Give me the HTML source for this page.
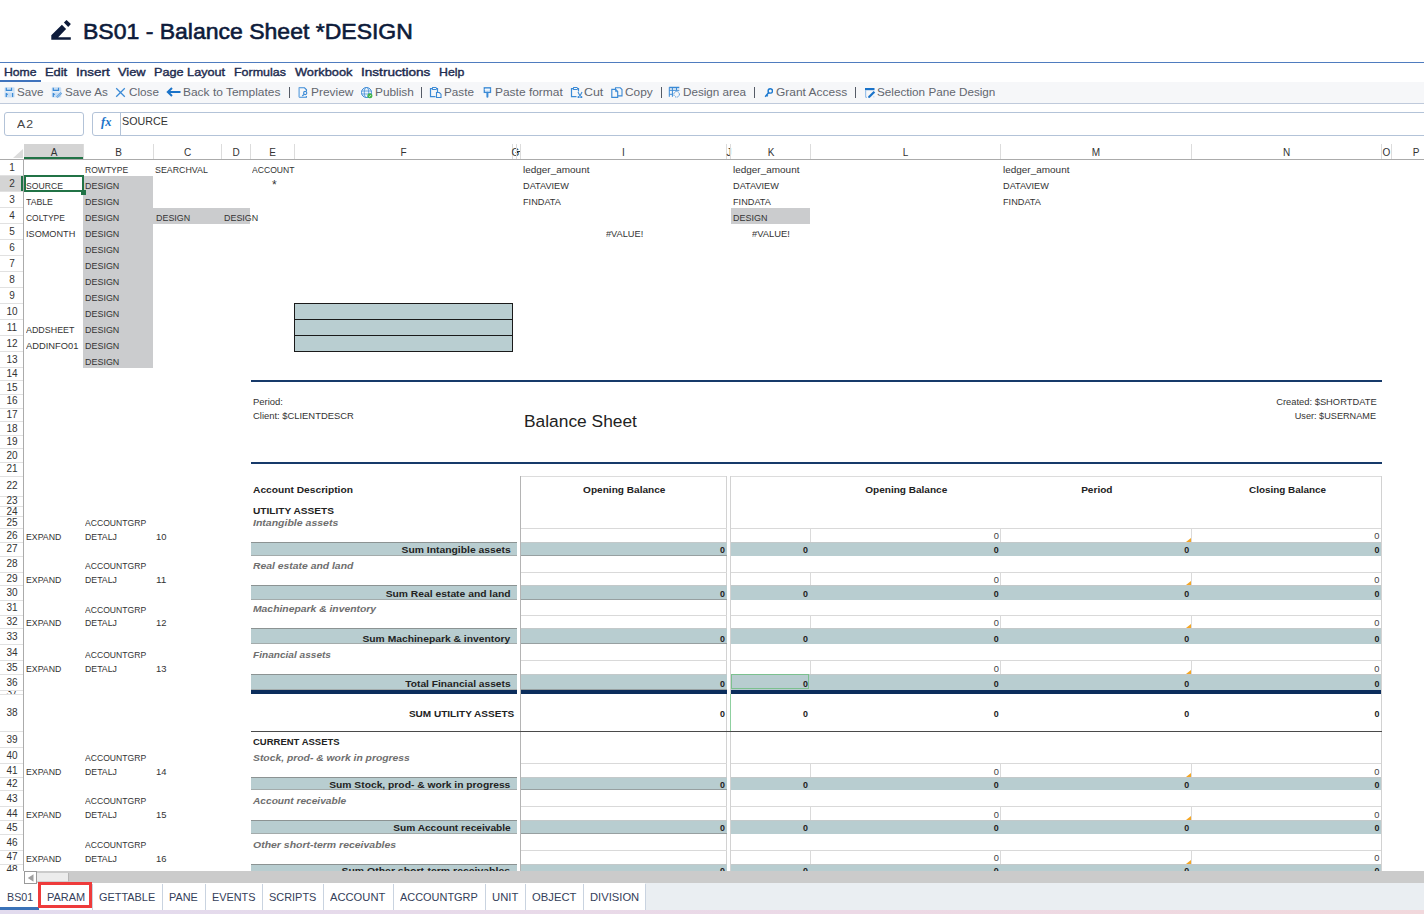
<!DOCTYPE html>
<html><head><meta charset="utf-8"><title>BS01 - Balance Sheet *DESIGN</title>
<style>
html,body{margin:0;padding:0;background:#fff;}
body{width:1424px;height:914px;position:relative;overflow:hidden;font-family:"Liberation Sans",sans-serif;}
body>div{position:absolute;box-sizing:border-box;}
.t{line-height:0;white-space:nowrap;}
</style></head><body>
<svg style="position:absolute;left:51px;top:20px" width="20" height="20" viewBox="0 0 20 20"><path d="M0.3 19.8 L0.3 15.2 L10.9 4.7 L15.1 8.9 L7.2 17.2 L19.8 17.2 L19.8 19.8 Z" fill="#0d1b3a"/><path d="M12.9 2.4 L15.5 0 L19.9 4.1 L17.2 7 Z" fill="#0d1b3a"/></svg>
<div class="t" style="left:83.00px;top:31.54px;font-size:22.4px;color:#0d1b3a;font-weight:normal;font-style:normal;transform:scaleX(1.0273);transform-origin:0 0;-webkit-text-stroke:0.6px #0d1b3a;">BS01 - Balance Sheet *DESIGN</div>
<div style="left:0px;top:62px;width:1424px;height:1px;background:#4f7cbf;"></div>
<div class="t" style="left:4.10px;top:71.92px;font-size:11.5px;color:#1d2b4f;font-weight:normal;font-style:normal;transform:scaleX(1.0627);transform-origin:0 0;-webkit-text-stroke:0.4px #1d2b4f;">Home</div>
<div class="t" style="left:45.20px;top:71.92px;font-size:11.5px;color:#1d2b4f;font-weight:normal;font-style:normal;transform:scaleX(1.1203);transform-origin:0 0;-webkit-text-stroke:0.4px #1d2b4f;">Edit</div>
<div class="t" style="left:75.80px;top:71.92px;font-size:11.5px;color:#1d2b4f;font-weight:normal;font-style:normal;transform:scaleX(1.1752);transform-origin:0 0;-webkit-text-stroke:0.4px #1d2b4f;">Insert</div>
<div class="t" style="left:118.20px;top:71.92px;font-size:11.5px;color:#1d2b4f;font-weight:normal;font-style:normal;transform:scaleX(1.1166);transform-origin:0 0;-webkit-text-stroke:0.4px #1d2b4f;">View</div>
<div class="t" style="left:154.40px;top:71.92px;font-size:11.5px;color:#1d2b4f;font-weight:normal;font-style:normal;transform:scaleX(1.1009);transform-origin:0 0;-webkit-text-stroke:0.4px #1d2b4f;">Page Layout</div>
<div class="t" style="left:234.20px;top:71.92px;font-size:11.5px;color:#1d2b4f;font-weight:normal;font-style:normal;transform:scaleX(1.0829);transform-origin:0 0;-webkit-text-stroke:0.4px #1d2b4f;">Formulas</div>
<div class="t" style="left:294.90px;top:71.92px;font-size:11.5px;color:#1d2b4f;font-weight:normal;font-style:normal;transform:scaleX(1.1133);transform-origin:0 0;-webkit-text-stroke:0.4px #1d2b4f;">Workbook</div>
<div class="t" style="left:361.30px;top:71.92px;font-size:11.5px;color:#1d2b4f;font-weight:normal;font-style:normal;transform:scaleX(1.1802);transform-origin:0 0;-webkit-text-stroke:0.4px #1d2b4f;">Instructions</div>
<div class="t" style="left:439.40px;top:71.92px;font-size:11.5px;color:#1d2b4f;font-weight:normal;font-style:normal;transform:scaleX(1.0697);transform-origin:0 0;-webkit-text-stroke:0.4px #1d2b4f;">Help</div>
<div style="left:0px;top:80px;width:41px;height:2px;background:#3f73bd;"></div>
<div style="left:0px;top:82px;width:1424px;height:21px;background:#f6f7f9;"></div>
<div style="left:0px;top:103px;width:1424px;height:1px;background:#bfcadb;"></div>
<div class="t" style="left:17.00px;top:92.18px;font-size:11.3px;color:#62666f;font-weight:normal;font-style:normal;transform:scaleX(1.0289);transform-origin:0 0;">Save</div>
<div class="t" style="left:64.70px;top:92.18px;font-size:11.3px;color:#62666f;font-weight:normal;font-style:normal;transform:scaleX(1.0323);transform-origin:0 0;">Save As</div>
<div class="t" style="left:128.70px;top:92.18px;font-size:11.3px;color:#62666f;font-weight:normal;font-style:normal;transform:scaleX(1.0350);transform-origin:0 0;">Close</div>
<div class="t" style="left:183.30px;top:92.18px;font-size:11.3px;color:#62666f;font-weight:normal;font-style:normal;transform:scaleX(1.0584);transform-origin:0 0;">Back to Templates</div>
<div class="t" style="left:311.20px;top:92.18px;font-size:11.3px;color:#62666f;font-weight:normal;font-style:normal;transform:scaleX(1.0575);transform-origin:0 0;">Preview</div>
<div class="t" style="left:374.70px;top:92.18px;font-size:11.3px;color:#62666f;font-weight:normal;font-style:normal;transform:scaleX(1.0469);transform-origin:0 0;">Publish</div>
<div class="t" style="left:443.70px;top:92.18px;font-size:11.3px;color:#62666f;font-weight:normal;font-style:normal;transform:scaleX(1.0348);transform-origin:0 0;">Paste</div>
<div class="t" style="left:495.10px;top:92.18px;font-size:11.3px;color:#62666f;font-weight:normal;font-style:normal;transform:scaleX(1.0584);transform-origin:0 0;">Paste format</div>
<div class="t" style="left:584.10px;top:92.18px;font-size:11.3px;color:#62666f;font-weight:normal;font-style:normal;transform:scaleX(1.0976);transform-origin:0 0;">Cut</div>
<div class="t" style="left:624.60px;top:92.18px;font-size:11.3px;color:#62666f;font-weight:normal;font-style:normal;transform:scaleX(1.0501);transform-origin:0 0;">Copy</div>
<div class="t" style="left:682.70px;top:92.18px;font-size:11.3px;color:#62666f;font-weight:normal;font-style:normal;transform:scaleX(1.0340);transform-origin:0 0;">Design area</div>
<div class="t" style="left:775.70px;top:92.18px;font-size:11.3px;color:#62666f;font-weight:normal;font-style:normal;transform:scaleX(1.0595);transform-origin:0 0;">Grant Access</div>
<div class="t" style="left:877.20px;top:92.18px;font-size:11.3px;color:#62666f;font-weight:normal;font-style:normal;transform:scaleX(1.0356);transform-origin:0 0;">Selection Pane Design</div>
<div style="left:289px;top:87px;width:1px;height:11px;background:#555b66;"></div>
<div style="left:421px;top:87px;width:1px;height:11px;background:#555b66;"></div>
<div style="left:661px;top:87px;width:1px;height:11px;background:#555b66;"></div>
<div style="left:754px;top:87px;width:1px;height:11px;background:#555b66;"></div>
<div style="left:855px;top:87px;width:1px;height:11px;background:#555b66;"></div>
<svg style="position:absolute;left:4px;top:87px" width="12" height="11" viewBox="0 0 12 11"><rect x="0.6" y="0.2" width="10" height="10.3" rx="1.2" fill="#c6ddf4"/><rect x="1.6" y="4.4" width="8" height="1" fill="#f4f8fc"/><path d="M2.3 0.8V3.3H7.5V0.8M2.3 6V9.9M8.6 6V9.9M2.3 7.3H3.8" fill="none" stroke="#3b8ad6" stroke-width="1.15"/></svg>
<svg style="position:absolute;left:51px;top:87px" width="12" height="11" viewBox="0 0 12 11"><rect x="0.7" y="0.2" width="9.5" height="10.3" rx="1.2" fill="#c6ddf4"/><rect x="1.7" y="4.4" width="7.5" height="1" fill="#f4f8fc"/><path d="M2.3 0.8V3.3H7.5V0.8M2.3 6V9.9M2.3 7.3H3.8" fill="none" stroke="#3b8ad6" stroke-width="1.15"/><path d="M5.8 10.3L10.4 5.8" stroke="#6aa6e0" stroke-width="2.2"/><path d="M5.8 10.3L10.4 5.8" stroke="#fff" stroke-width="0.5" opacity="0.6"/></svg>
<svg style="position:absolute;left:115px;top:87px" width="11" height="11" viewBox="0 0 11 11"><path d="M1.2 1.2L9.8 9.8M9.8 1.2L1.2 9.8" stroke="#3b8ad6" stroke-width="1.25"/></svg>
<svg style="position:absolute;left:166px;top:87px" width="15" height="10" viewBox="0 0 15 10"><path d="M2 5H14.5M6 1L1.8 5L6 9" fill="none" stroke="#1a73c9" stroke-width="2"/></svg>
<svg style="position:absolute;left:298px;top:87px" width="10" height="11" viewBox="0 0 10 11"><path d="M1.2 10.3V0.8H6.5L8.5 2.8V4" fill="none" stroke="#3b8ad6" stroke-width="1.1"/><path d="M1.2 10.3H8.4V9" fill="none" stroke="#3b8ad6" stroke-width="1.1"/><path d="M1.2 1V10" stroke="#9cc4ea" stroke-width="1.1"/><circle cx="7.2" cy="6" r="1.6" fill="none" stroke="#3b8ad6" stroke-width="1.1"/><path d="M6 7.3L4.3 9" stroke="#3b8ad6" stroke-width="1.2"/></svg>
<svg style="position:absolute;left:361px;top:87px" width="13" height="12" viewBox="0 0 13 12"><circle cx="5.5" cy="5.5" r="5" fill="#e9f2fb" stroke="#3b8ad6" stroke-width="1"/><ellipse cx="5.5" cy="5.5" rx="2.2" ry="5" fill="none" stroke="#3b8ad6" stroke-width="0.8"/><path d="M0.5 4H10.5M0.5 7H10.5" stroke="#3b8ad6" stroke-width="0.7"/><circle cx="8.9" cy="8.7" r="2.5" fill="#3fb44a"/><path d="M7.9 8.8L8.7 9.5L10 8" fill="none" stroke="#fff" stroke-width="0.7"/></svg>
<svg style="position:absolute;left:429px;top:87px" width="13" height="11" viewBox="0 0 13 11"><path d="M6.5 9.6H1.5V1.6H8.5V5" fill="none" stroke="#3b8ad6" stroke-width="1.2"/><rect x="3.6" y="0.5" width="3.4" height="2" fill="#f6f7f9" stroke="#3b8ad6" stroke-width="1"/><path d="M7.5 5.5H10.3L12 7.2V10.6H7.5Z" fill="#f6f7f9" stroke="#3b8ad6" stroke-width="1.1"/></svg>
<svg style="position:absolute;left:483px;top:87px" width="9" height="11" viewBox="0 0 9 11"><rect x="1.3" y="0.8" width="6.2" height="4.6" fill="#dbe9f7" stroke="#3b8ad6" stroke-width="1.3"/><path d="M1.6 2.6H7.2" stroke="#fff" stroke-width="0.7"/><path d="M4.4 5.8V9.8" stroke="#3b8ad6" stroke-width="2" stroke-linecap="round"/></svg>
<svg style="position:absolute;left:570px;top:87px" width="13" height="11" viewBox="0 0 13 11"><path d="M6.5 9.6H1.5V1.6H8.5V4.5" fill="none" stroke="#3b8ad6" stroke-width="1.2"/><rect x="3.6" y="0.5" width="3.4" height="2" fill="#f6f7f9" stroke="#3b8ad6" stroke-width="1"/><path d="M8 5L10 9M12 5L10 9" stroke="#3b8ad6" stroke-width="1.1"/><circle cx="8.6" cy="10" r="1.1" fill="#3b8ad6"/><circle cx="11.3" cy="10" r="1.1" fill="#3b8ad6"/></svg>
<svg style="position:absolute;left:611px;top:87px" width="12" height="11" viewBox="0 0 12 11"><path d="M4.5 2.6V0.8H9.3L11 2.5V8.9H7" fill="none" stroke="#3b8ad6" stroke-width="1.1"/><path d="M0.8 2.4H4.6L6.7 4.5V10.4H0.8Z" fill="#f6f7f9" stroke="#3b8ad6" stroke-width="1.15"/><path d="M4.5 2.4V4.6H6.7" fill="none" stroke="#3b8ad6" stroke-width="0.8"/></svg>
<svg style="position:absolute;left:668px;top:86px" width="12" height="12" viewBox="0 0 12 12"><path d="M1.3 1.5H11.3" stroke="#3b8ad6" stroke-width="1.5"/><path d="M1.3 1.2V10.8M4.4 1.2V10.8M8.5 1.2V4.3M1.3 4.3H11.3M1.3 8.3H4.4" fill="none" stroke="#3b8ad6" stroke-width="1"/><circle cx="8.6" cy="8.3" r="2.8" fill="none" stroke="#3b8ad6" stroke-width="1" stroke-dasharray="1.3 1"/></svg>
<svg style="position:absolute;left:764px;top:87px" width="9" height="12" viewBox="0 0 9 12"><circle cx="6.3" cy="3.9" r="2.2" fill="none" stroke="#1a78cf" stroke-width="1.4"/><path d="M4.7 5.6L1.2 9.8M2.6 8.1L3.8 9.2" stroke="#1a78cf" stroke-width="1.5"/></svg>
<svg style="position:absolute;left:864px;top:87px" width="12" height="12" viewBox="0 0 12 12"><rect x="1" y="1" width="9.5" height="2.2" fill="#1a73c9"/><path d="M1.6 3V10.3M1.6 10.3H3M9.8 9.6V10.3" stroke="#9cc2ea" stroke-width="1.2"/><path d="M4.8 10.3L10.4 4.7" stroke="#1a73c9" stroke-width="2.2"/><path d="M4.5 10.6L5.3 9.8" stroke="#1a73c9" stroke-width="1.2"/></svg>
<div style="left:4px;top:112px;width:80px;height:24px;border:1px solid #b3c3d8;border-radius:3px;background:#fff"></div>
<div class="t" style="left:17.00px;top:123.88px;font-size:11.3px;color:#444;font-weight:normal;font-style:normal;transform:scaleX(1.0853);transform-origin:0 0;letter-spacing:1px;">A2</div>
<div style="left:92px;top:112px;width:1340px;height:24px;border:1px solid #b3c3d8;border-radius:3px;background:#fff"></div>
<div style="left:120px;top:113px;width:1px;height:22px;background:#b3c3d8;"></div>
<div class="t" style="left:101px;top:121.8px;font-size:12.5px;color:#1a73c9;font-weight:bold;font-style:italic;font-family:'Liberation Serif',serif">fx</div>
<div class="t" style="left:121.50px;top:121.38px;font-size:11.3px;color:#333;font-weight:normal;font-style:normal;transform:scaleX(0.9474);transform-origin:0 0;">SOURCE</div>
<div style="left:24px;top:144px;width:59px;height:15px;background:#d4d4d4;"></div>
<div style="left:24px;top:157px;width:59px;height:2px;background:#217346;"></div>
<div style="left:0px;top:159px;width:1424px;height:1px;background:#ababab;"></div>
<div class="t" style="left:50.66px;top:152.73px;font-size:10px;color:#333;font-weight:normal;font-style:normal;">A</div>
<div style="left:83px;top:144px;width:1px;height:15px;background:#dcdcdc;"></div>
<div class="t" style="left:115.17px;top:152.73px;font-size:10px;color:#333;font-weight:normal;font-style:normal;">B</div>
<div style="left:153px;top:144px;width:1px;height:15px;background:#dcdcdc;"></div>
<div class="t" style="left:183.89px;top:152.73px;font-size:10px;color:#333;font-weight:normal;font-style:normal;">C</div>
<div style="left:221px;top:144px;width:1px;height:15px;background:#dcdcdc;"></div>
<div class="t" style="left:232.39px;top:152.73px;font-size:10px;color:#333;font-weight:normal;font-style:normal;">D</div>
<div style="left:250px;top:144px;width:1px;height:15px;background:#dcdcdc;"></div>
<div class="t" style="left:269.17px;top:152.73px;font-size:10px;color:#333;font-weight:normal;font-style:normal;">E</div>
<div style="left:294px;top:144px;width:1px;height:15px;background:#dcdcdc;"></div>
<div class="t" style="left:400.45px;top:152.73px;font-size:10px;color:#333;font-weight:normal;font-style:normal;">F</div>
<div style="left:512px;top:144px;width:1px;height:15px;background:#dcdcdc;"></div>
<div class="t" style="left:511.61px;top:152.73px;font-size:10px;color:#333;font-weight:normal;font-style:normal;">G</div>
<div style="left:516px;top:144px;width:1px;height:15px;background:#dcdcdc;"></div>
<div style="left:517px;top:144px;width:3px;height:15px;overflow:hidden">
<div class="t" style="position:absolute;left:-2.11px;top:8.73px;font-size:10px;color:#333">H</div></div>
<div style="left:520px;top:144px;width:1px;height:15px;background:#dcdcdc;"></div>
<div class="t" style="left:622.11px;top:152.73px;font-size:10px;color:#333;font-weight:normal;font-style:normal;">I</div>
<div style="left:726px;top:144px;width:1px;height:15px;background:#dcdcdc;"></div>
<div class="t" style="left:726.50px;top:152.73px;font-size:10px;color:#333;font-weight:normal;font-style:normal;">J</div>
<div style="left:730px;top:144px;width:1px;height:15px;background:#dcdcdc;"></div>
<div class="t" style="left:767.66px;top:152.73px;font-size:10px;color:#333;font-weight:normal;font-style:normal;">K</div>
<div style="left:810px;top:144px;width:1px;height:15px;background:#dcdcdc;"></div>
<div class="t" style="left:902.72px;top:152.73px;font-size:10px;color:#333;font-weight:normal;font-style:normal;">L</div>
<div style="left:1000px;top:144px;width:1px;height:15px;background:#dcdcdc;"></div>
<div class="t" style="left:1091.83px;top:152.73px;font-size:10px;color:#333;font-weight:normal;font-style:normal;">M</div>
<div style="left:1191px;top:144px;width:1px;height:15px;background:#dcdcdc;"></div>
<div class="t" style="left:1282.89px;top:152.73px;font-size:10px;color:#333;font-weight:normal;font-style:normal;">N</div>
<div style="left:1381px;top:144px;width:1px;height:15px;background:#dcdcdc;"></div>
<div style="left:1382px;top:144px;width:9px;height:15px;overflow:hidden">
<div class="t" style="position:absolute;left:0.61px;top:8.73px;font-size:10px;color:#333">O</div></div>
<div style="left:1391px;top:144px;width:1px;height:15px;background:#dcdcdc;"></div>
<div class="t" style="left:1412.66px;top:152.73px;font-size:10px;color:#333;font-weight:normal;font-style:normal;">P</div>
<svg style="position:absolute;left:13px;top:149px" width="10" height="9" viewBox="0 0 10 9"><path d="M10 0V9H0Z" fill="#dcdcdc"/></svg>
<div style="left:23px;top:159px;width:1px;height:712px;background:#ababab;"></div>
<div style="left:0px;top:175px;width:23px;height:16px;background:#d4d4d4;"></div>
<div style="left:21px;top:176px;width:2px;height:15px;background:#217346;"></div>
<div style="left:0px;top:175px;width:23px;height:1px;background:#e1e1e1;"></div>
<div class="t" style="left:9.22px;top:167.63px;font-size:10px;color:#333;font-weight:normal;font-style:normal;">1</div>
<div style="left:0px;top:191px;width:23px;height:1px;background:#e1e1e1;"></div>
<div class="t" style="left:9.22px;top:183.63px;font-size:10px;color:#333;font-weight:normal;font-style:normal;">2</div>
<div style="left:0px;top:207px;width:23px;height:1px;background:#e1e1e1;"></div>
<div class="t" style="left:9.22px;top:199.63px;font-size:10px;color:#333;font-weight:normal;font-style:normal;">3</div>
<div style="left:0px;top:223px;width:23px;height:1px;background:#e1e1e1;"></div>
<div class="t" style="left:9.22px;top:215.63px;font-size:10px;color:#333;font-weight:normal;font-style:normal;">4</div>
<div style="left:0px;top:239px;width:23px;height:1px;background:#e1e1e1;"></div>
<div class="t" style="left:9.22px;top:231.63px;font-size:10px;color:#333;font-weight:normal;font-style:normal;">5</div>
<div style="left:0px;top:255px;width:23px;height:1px;background:#e1e1e1;"></div>
<div class="t" style="left:9.22px;top:247.63px;font-size:10px;color:#333;font-weight:normal;font-style:normal;">6</div>
<div style="left:0px;top:271px;width:23px;height:1px;background:#e1e1e1;"></div>
<div class="t" style="left:9.22px;top:263.64px;font-size:10px;color:#333;font-weight:normal;font-style:normal;">7</div>
<div style="left:0px;top:287px;width:23px;height:1px;background:#e1e1e1;"></div>
<div class="t" style="left:9.22px;top:279.64px;font-size:10px;color:#333;font-weight:normal;font-style:normal;">8</div>
<div style="left:0px;top:303px;width:23px;height:1px;background:#e1e1e1;"></div>
<div class="t" style="left:9.22px;top:295.64px;font-size:10px;color:#333;font-weight:normal;font-style:normal;">9</div>
<div style="left:0px;top:319px;width:23px;height:1px;background:#e1e1e1;"></div>
<div class="t" style="left:6.44px;top:311.64px;font-size:10px;color:#333;font-weight:normal;font-style:normal;">10</div>
<div style="left:0px;top:335px;width:23px;height:1px;background:#e1e1e1;"></div>
<div class="t" style="left:6.81px;top:327.64px;font-size:10px;color:#333;font-weight:normal;font-style:normal;">11</div>
<div style="left:0px;top:351px;width:23px;height:1px;background:#e1e1e1;"></div>
<div class="t" style="left:6.44px;top:343.64px;font-size:10px;color:#333;font-weight:normal;font-style:normal;">12</div>
<div style="left:0px;top:367px;width:23px;height:1px;background:#e1e1e1;"></div>
<div class="t" style="left:6.44px;top:359.64px;font-size:10px;color:#333;font-weight:normal;font-style:normal;">13</div>
<div style="left:0px;top:380px;width:23px;height:1px;background:#e1e1e1;"></div>
<div class="t" style="left:6.44px;top:374.39px;font-size:10px;color:#333;font-weight:normal;font-style:normal;">14</div>
<div style="left:0px;top:394px;width:23px;height:1px;background:#e1e1e1;"></div>
<div class="t" style="left:6.44px;top:387.89px;font-size:10px;color:#333;font-weight:normal;font-style:normal;">15</div>
<div style="left:0px;top:408px;width:23px;height:1px;background:#e1e1e1;"></div>
<div class="t" style="left:6.44px;top:401.49px;font-size:10px;color:#333;font-weight:normal;font-style:normal;">16</div>
<div style="left:0px;top:421px;width:23px;height:1px;background:#e1e1e1;"></div>
<div class="t" style="left:6.44px;top:415.14px;font-size:10px;color:#333;font-weight:normal;font-style:normal;">17</div>
<div style="left:0px;top:435px;width:23px;height:1px;background:#e1e1e1;"></div>
<div class="t" style="left:6.44px;top:428.64px;font-size:10px;color:#333;font-weight:normal;font-style:normal;">18</div>
<div style="left:0px;top:448px;width:23px;height:1px;background:#e1e1e1;"></div>
<div class="t" style="left:6.44px;top:442.14px;font-size:10px;color:#333;font-weight:normal;font-style:normal;">19</div>
<div style="left:0px;top:462px;width:23px;height:1px;background:#e1e1e1;"></div>
<div class="t" style="left:6.44px;top:455.74px;font-size:10px;color:#333;font-weight:normal;font-style:normal;">20</div>
<div style="left:0px;top:476px;width:23px;height:1px;background:#e1e1e1;"></div>
<div class="t" style="left:6.44px;top:469.39px;font-size:10px;color:#333;font-weight:normal;font-style:normal;">21</div>
<div style="left:0px;top:496px;width:23px;height:1px;background:#e1e1e1;"></div>
<div class="t" style="left:6.44px;top:486.34px;font-size:10px;color:#333;font-weight:normal;font-style:normal;">22</div>
<div style="left:0px;top:506px;width:23px;height:1px;background:#e1e1e1;"></div>
<div class="t" style="left:6.44px;top:501.39px;font-size:10px;color:#333;font-weight:normal;font-style:normal;">23</div>
<div style="left:0px;top:516px;width:23px;height:1px;background:#e1e1e1;"></div>
<div class="t" style="left:6.44px;top:511.54px;font-size:10px;color:#333;font-weight:normal;font-style:normal;">24</div>
<div style="left:0px;top:528px;width:23px;height:1px;background:#e1e1e1;"></div>
<div class="t" style="left:6.44px;top:522.74px;font-size:10px;color:#333;font-weight:normal;font-style:normal;">25</div>
<div style="left:0px;top:542px;width:23px;height:1px;background:#e1e1e1;"></div>
<div class="t" style="left:6.44px;top:535.59px;font-size:10px;color:#333;font-weight:normal;font-style:normal;">26</div>
<div style="left:0px;top:556px;width:23px;height:1px;background:#e1e1e1;"></div>
<div class="t" style="left:6.44px;top:549.38px;font-size:10px;color:#333;font-weight:normal;font-style:normal;">27</div>
<div style="left:0px;top:572px;width:23px;height:1px;background:#e1e1e1;"></div>
<div class="t" style="left:6.44px;top:564.24px;font-size:10px;color:#333;font-weight:normal;font-style:normal;">28</div>
<div style="left:0px;top:585px;width:23px;height:1px;background:#e1e1e1;"></div>
<div class="t" style="left:6.44px;top:578.99px;font-size:10px;color:#333;font-weight:normal;font-style:normal;">29</div>
<div style="left:0px;top:600px;width:23px;height:1px;background:#e1e1e1;"></div>
<div class="t" style="left:6.44px;top:592.99px;font-size:10px;color:#333;font-weight:normal;font-style:normal;">30</div>
<div style="left:0px;top:615px;width:23px;height:1px;background:#e1e1e1;"></div>
<div class="t" style="left:6.44px;top:607.84px;font-size:10px;color:#333;font-weight:normal;font-style:normal;">31</div>
<div style="left:0px;top:628px;width:23px;height:1px;background:#e1e1e1;"></div>
<div class="t" style="left:6.44px;top:622.18px;font-size:10px;color:#333;font-weight:normal;font-style:normal;">32</div>
<div style="left:0px;top:644px;width:23px;height:1px;background:#e1e1e1;"></div>
<div class="t" style="left:6.44px;top:636.88px;font-size:10px;color:#333;font-weight:normal;font-style:normal;">33</div>
<div style="left:0px;top:660px;width:23px;height:1px;background:#e1e1e1;"></div>
<div class="t" style="left:6.44px;top:652.78px;font-size:10px;color:#333;font-weight:normal;font-style:normal;">34</div>
<div style="left:0px;top:674px;width:23px;height:1px;background:#e1e1e1;"></div>
<div class="t" style="left:6.44px;top:667.63px;font-size:10px;color:#333;font-weight:normal;font-style:normal;">35</div>
<div style="left:0px;top:690px;width:23px;height:1px;background:#e1e1e1;"></div>
<div class="t" style="left:6.44px;top:682.68px;font-size:10px;color:#333;font-weight:normal;font-style:normal;">36</div>
<div style="left:0px;top:694px;width:23px;height:1px;background:#e1e1e1;"></div>
<div style="left:0px;top:691px;width:23px;height:3px;overflow:hidden"><div class="t" style="position:absolute;left:6.44px;top:2.04px;font-size:10px;color:#333">37</div></div>
<div style="left:0px;top:731px;width:23px;height:1px;background:#e1e1e1;"></div>
<div class="t" style="left:6.44px;top:713.09px;font-size:10px;color:#333;font-weight:normal;font-style:normal;">38</div>
<div style="left:0px;top:747px;width:23px;height:1px;background:#e1e1e1;"></div>
<div class="t" style="left:6.44px;top:739.63px;font-size:10px;color:#333;font-weight:normal;font-style:normal;">39</div>
<div style="left:0px;top:763px;width:23px;height:1px;background:#e1e1e1;"></div>
<div class="t" style="left:6.44px;top:755.59px;font-size:10px;color:#333;font-weight:normal;font-style:normal;">40</div>
<div style="left:0px;top:777px;width:23px;height:1px;background:#e1e1e1;"></div>
<div class="t" style="left:6.44px;top:770.63px;font-size:10px;color:#333;font-weight:normal;font-style:normal;">41</div>
<div style="left:0px;top:790px;width:23px;height:1px;background:#e1e1e1;"></div>
<div class="t" style="left:6.44px;top:784.34px;font-size:10px;color:#333;font-weight:normal;font-style:normal;">42</div>
<div style="left:0px;top:806px;width:23px;height:1px;background:#e1e1e1;"></div>
<div class="t" style="left:6.44px;top:798.93px;font-size:10px;color:#333;font-weight:normal;font-style:normal;">43</div>
<div style="left:0px;top:820px;width:23px;height:1px;background:#e1e1e1;"></div>
<div class="t" style="left:6.44px;top:813.74px;font-size:10px;color:#333;font-weight:normal;font-style:normal;">44</div>
<div style="left:0px;top:834px;width:23px;height:1px;background:#e1e1e1;"></div>
<div class="t" style="left:6.44px;top:827.63px;font-size:10px;color:#333;font-weight:normal;font-style:normal;">45</div>
<div style="left:0px;top:850px;width:23px;height:1px;background:#e1e1e1;"></div>
<div class="t" style="left:6.44px;top:842.74px;font-size:10px;color:#333;font-weight:normal;font-style:normal;">46</div>
<div style="left:0px;top:864px;width:23px;height:1px;background:#e1e1e1;"></div>
<div class="t" style="left:6.44px;top:857.49px;font-size:10px;color:#333;font-weight:normal;font-style:normal;">47</div>
<div class="t" style="left:6.44px;top:869.93px;font-size:10px;color:#333;font-weight:normal;font-style:normal;">48</div>
<div style="left:83px;top:176px;width:70px;height:192px;background:#cbccce;"></div>
<div style="left:153px;top:208px;width:97px;height:16px;background:#cbccce;"></div>
<div style="left:731px;top:208px;width:79px;height:16px;background:#cbccce;"></div>
<div class="t" style="left:84.80px;top:170.07px;font-size:9.9px;color:#333;font-weight:normal;font-style:normal;transform:scaleX(0.8651);transform-origin:0 0;">ROWTYPE</div>
<div class="t" style="left:155.40px;top:170.07px;font-size:9.9px;color:#333;font-weight:normal;font-style:normal;transform:scaleX(0.8947);transform-origin:0 0;">SEARCHVAL</div>
<div class="t" style="left:252.40px;top:170.07px;font-size:9.9px;color:#333;font-weight:normal;font-style:normal;transform:scaleX(0.8703);transform-origin:0 0;">ACCOUNT</div>
<div class="t" style="left:523.00px;top:170.07px;font-size:9.9px;color:#333;font-weight:normal;font-style:normal;transform:scaleX(1.0084);transform-origin:0 0;">ledger_amount</div>
<div class="t" style="left:733.00px;top:170.07px;font-size:9.9px;color:#333;font-weight:normal;font-style:normal;transform:scaleX(1.0084);transform-origin:0 0;">ledger_amount</div>
<div class="t" style="left:1003.00px;top:170.07px;font-size:9.9px;color:#333;font-weight:normal;font-style:normal;transform:scaleX(1.0084);transform-origin:0 0;">ledger_amount</div>
<div class="t" style="left:25.60px;top:186.07px;font-size:9.9px;color:#333;font-weight:normal;font-style:normal;transform:scaleX(0.8736);transform-origin:0 0;">SOURCE</div>
<div class="t" style="left:271.97px;top:185.34px;font-size:12px;color:#333;font-weight:normal;font-style:normal;">*</div>
<div class="t" style="left:523.00px;top:186.07px;font-size:9.9px;color:#333;font-weight:normal;font-style:normal;transform:scaleX(0.9293);transform-origin:0 0;">DATAVIEW</div>
<div class="t" style="left:733.00px;top:186.07px;font-size:9.9px;color:#333;font-weight:normal;font-style:normal;transform:scaleX(0.9293);transform-origin:0 0;">DATAVIEW</div>
<div class="t" style="left:1003.00px;top:186.07px;font-size:9.9px;color:#333;font-weight:normal;font-style:normal;transform:scaleX(0.9293);transform-origin:0 0;">DATAVIEW</div>
<div class="t" style="left:25.60px;top:202.07px;font-size:9.9px;color:#333;font-weight:normal;font-style:normal;transform:scaleX(0.8815);transform-origin:0 0;">TABLE</div>
<div class="t" style="left:523.00px;top:202.07px;font-size:9.9px;color:#333;font-weight:normal;font-style:normal;transform:scaleX(0.9295);transform-origin:0 0;">FINDATA</div>
<div class="t" style="left:733.00px;top:202.07px;font-size:9.9px;color:#333;font-weight:normal;font-style:normal;transform:scaleX(0.9295);transform-origin:0 0;">FINDATA</div>
<div class="t" style="left:1003.00px;top:202.07px;font-size:9.9px;color:#333;font-weight:normal;font-style:normal;transform:scaleX(0.9295);transform-origin:0 0;">FINDATA</div>
<div class="t" style="left:25.60px;top:218.07px;font-size:9.9px;color:#333;font-weight:normal;font-style:normal;transform:scaleX(0.8575);transform-origin:0 0;">COLTYPE</div>
<div class="t" style="left:155.50px;top:218.07px;font-size:9.9px;color:#333;font-weight:normal;font-style:normal;transform:scaleX(0.9037);transform-origin:0 0;">DESIGN</div>
<div class="t" style="left:223.70px;top:218.07px;font-size:9.9px;color:#333;font-weight:normal;font-style:normal;transform:scaleX(0.9037);transform-origin:0 0;">DESIGN</div>
<div class="t" style="left:733.20px;top:218.07px;font-size:9.9px;color:#333;font-weight:normal;font-style:normal;transform:scaleX(0.9089);transform-origin:0 0;">DESIGN</div>
<div class="t" style="left:25.60px;top:234.07px;font-size:9.9px;color:#333;font-weight:normal;font-style:normal;transform:scaleX(0.9260);transform-origin:0 0;">ISOMONTH</div>
<div class="t" style="left:606.00px;top:234.07px;font-size:9.9px;color:#333;font-weight:normal;font-style:normal;transform:scaleX(0.9328);transform-origin:0 0;">#VALUE!</div>
<div class="t" style="left:752.00px;top:234.07px;font-size:9.9px;color:#333;font-weight:normal;font-style:normal;transform:scaleX(0.9503);transform-origin:0 0;">#VALUE!</div>
<div class="t" style="left:85.00px;top:186.07px;font-size:9.9px;color:#333;font-weight:normal;font-style:normal;transform:scaleX(0.9063);transform-origin:0 0;">DESIGN</div>
<div class="t" style="left:85.00px;top:202.07px;font-size:9.9px;color:#333;font-weight:normal;font-style:normal;transform:scaleX(0.9063);transform-origin:0 0;">DESIGN</div>
<div class="t" style="left:85.00px;top:218.07px;font-size:9.9px;color:#333;font-weight:normal;font-style:normal;transform:scaleX(0.9063);transform-origin:0 0;">DESIGN</div>
<div class="t" style="left:85.00px;top:234.07px;font-size:9.9px;color:#333;font-weight:normal;font-style:normal;transform:scaleX(0.9063);transform-origin:0 0;">DESIGN</div>
<div class="t" style="left:85.00px;top:250.07px;font-size:9.9px;color:#333;font-weight:normal;font-style:normal;transform:scaleX(0.9063);transform-origin:0 0;">DESIGN</div>
<div class="t" style="left:85.00px;top:266.07px;font-size:9.9px;color:#333;font-weight:normal;font-style:normal;transform:scaleX(0.9063);transform-origin:0 0;">DESIGN</div>
<div class="t" style="left:85.00px;top:282.07px;font-size:9.9px;color:#333;font-weight:normal;font-style:normal;transform:scaleX(0.9063);transform-origin:0 0;">DESIGN</div>
<div class="t" style="left:85.00px;top:298.07px;font-size:9.9px;color:#333;font-weight:normal;font-style:normal;transform:scaleX(0.9063);transform-origin:0 0;">DESIGN</div>
<div class="t" style="left:85.00px;top:314.07px;font-size:9.9px;color:#333;font-weight:normal;font-style:normal;transform:scaleX(0.9063);transform-origin:0 0;">DESIGN</div>
<div class="t" style="left:85.00px;top:330.07px;font-size:9.9px;color:#333;font-weight:normal;font-style:normal;transform:scaleX(0.9063);transform-origin:0 0;">DESIGN</div>
<div class="t" style="left:85.00px;top:346.07px;font-size:9.9px;color:#333;font-weight:normal;font-style:normal;transform:scaleX(0.9063);transform-origin:0 0;">DESIGN</div>
<div class="t" style="left:85.00px;top:362.07px;font-size:9.9px;color:#333;font-weight:normal;font-style:normal;transform:scaleX(0.9063);transform-origin:0 0;">DESIGN</div>
<div class="t" style="left:25.60px;top:330.07px;font-size:9.9px;color:#333;font-weight:normal;font-style:normal;transform:scaleX(0.9015);transform-origin:0 0;">ADDSHEET</div>
<div class="t" style="left:25.60px;top:346.07px;font-size:9.9px;color:#333;font-weight:normal;font-style:normal;transform:scaleX(0.9449);transform-origin:0 0;">ADDINFO01</div>
<div class="t" style="left:85.10px;top:523.07px;font-size:9.9px;color:#333;font-weight:normal;font-style:normal;transform:scaleX(0.8707);transform-origin:0 0;">ACCOUNTGRP</div>
<div class="t" style="left:25.70px;top:536.97px;font-size:9.9px;color:#333;font-weight:normal;font-style:normal;transform:scaleX(0.8855);transform-origin:0 0;">EXPAND</div>
<div class="t" style="left:85.10px;top:536.97px;font-size:9.9px;color:#333;font-weight:normal;font-style:normal;transform:scaleX(0.8858);transform-origin:0 0;">DETALJ</div>
<div class="t" style="left:155.50px;top:536.97px;font-size:9.9px;color:#333;font-weight:normal;font-style:normal;transform:scaleX(0.9535);transform-origin:0 0;">10</div>
<div class="t" style="left:85.10px;top:566.47px;font-size:9.9px;color:#333;font-weight:normal;font-style:normal;transform:scaleX(0.8707);transform-origin:0 0;">ACCOUNTGRP</div>
<div class="t" style="left:25.70px;top:580.37px;font-size:9.9px;color:#333;font-weight:normal;font-style:normal;transform:scaleX(0.8855);transform-origin:0 0;">EXPAND</div>
<div class="t" style="left:85.10px;top:580.37px;font-size:9.9px;color:#333;font-weight:normal;font-style:normal;transform:scaleX(0.8858);transform-origin:0 0;">DETALJ</div>
<div class="t" style="left:155.50px;top:580.37px;font-size:9.9px;color:#333;font-weight:normal;font-style:normal;transform:scaleX(1.0217);transform-origin:0 0;">11</div>
<div class="t" style="left:85.10px;top:609.87px;font-size:9.9px;color:#333;font-weight:normal;font-style:normal;transform:scaleX(0.8707);transform-origin:0 0;">ACCOUNTGRP</div>
<div class="t" style="left:25.70px;top:623.37px;font-size:9.9px;color:#333;font-weight:normal;font-style:normal;transform:scaleX(0.8855);transform-origin:0 0;">EXPAND</div>
<div class="t" style="left:85.10px;top:623.37px;font-size:9.9px;color:#333;font-weight:normal;font-style:normal;transform:scaleX(0.8858);transform-origin:0 0;">DETALJ</div>
<div class="t" style="left:155.50px;top:623.37px;font-size:9.9px;color:#333;font-weight:normal;font-style:normal;transform:scaleX(0.9535);transform-origin:0 0;">12</div>
<div class="t" style="left:85.10px;top:654.97px;font-size:9.9px;color:#333;font-weight:normal;font-style:normal;transform:scaleX(0.8707);transform-origin:0 0;">ACCOUNTGRP</div>
<div class="t" style="left:25.70px;top:669.17px;font-size:9.9px;color:#333;font-weight:normal;font-style:normal;transform:scaleX(0.8855);transform-origin:0 0;">EXPAND</div>
<div class="t" style="left:85.10px;top:669.17px;font-size:9.9px;color:#333;font-weight:normal;font-style:normal;transform:scaleX(0.8858);transform-origin:0 0;">DETALJ</div>
<div class="t" style="left:155.50px;top:669.17px;font-size:9.9px;color:#333;font-weight:normal;font-style:normal;transform:scaleX(0.9535);transform-origin:0 0;">13</div>
<div class="t" style="left:85.10px;top:757.97px;font-size:9.9px;color:#333;font-weight:normal;font-style:normal;transform:scaleX(0.8707);transform-origin:0 0;">ACCOUNTGRP</div>
<div class="t" style="left:25.70px;top:772.17px;font-size:9.9px;color:#333;font-weight:normal;font-style:normal;transform:scaleX(0.8855);transform-origin:0 0;">EXPAND</div>
<div class="t" style="left:85.10px;top:772.17px;font-size:9.9px;color:#333;font-weight:normal;font-style:normal;transform:scaleX(0.8858);transform-origin:0 0;">DETALJ</div>
<div class="t" style="left:155.50px;top:772.17px;font-size:9.9px;color:#333;font-weight:normal;font-style:normal;transform:scaleX(0.9535);transform-origin:0 0;">14</div>
<div class="t" style="left:85.10px;top:801.17px;font-size:9.9px;color:#333;font-weight:normal;font-style:normal;transform:scaleX(0.8707);transform-origin:0 0;">ACCOUNTGRP</div>
<div class="t" style="left:25.70px;top:815.17px;font-size:9.9px;color:#333;font-weight:normal;font-style:normal;transform:scaleX(0.8855);transform-origin:0 0;">EXPAND</div>
<div class="t" style="left:85.10px;top:815.17px;font-size:9.9px;color:#333;font-weight:normal;font-style:normal;transform:scaleX(0.8858);transform-origin:0 0;">DETALJ</div>
<div class="t" style="left:155.50px;top:815.17px;font-size:9.9px;color:#333;font-weight:normal;font-style:normal;transform:scaleX(0.9535);transform-origin:0 0;">15</div>
<div class="t" style="left:85.10px;top:845.17px;font-size:9.9px;color:#333;font-weight:normal;font-style:normal;transform:scaleX(0.8707);transform-origin:0 0;">ACCOUNTGRP</div>
<div class="t" style="left:25.70px;top:858.67px;font-size:9.9px;color:#333;font-weight:normal;font-style:normal;transform:scaleX(0.8855);transform-origin:0 0;">EXPAND</div>
<div class="t" style="left:85.10px;top:858.67px;font-size:9.9px;color:#333;font-weight:normal;font-style:normal;transform:scaleX(0.8858);transform-origin:0 0;">DETALJ</div>
<div class="t" style="left:155.50px;top:858.67px;font-size:9.9px;color:#333;font-weight:normal;font-style:normal;transform:scaleX(0.9535);transform-origin:0 0;">16</div>
<div style="left:24px;top:175px;width:60px;height:17px;border:2px solid #217346;"></div>
<div style="left:81px;top:190px;width:5px;height:5px;background:#217346;"></div>
<div style="left:294px;top:303px;width:219px;height:48px;background:#b9ced1;"></div>
<div style="left:294px;top:303px;width:219px;height:1px;background:#1a1a1a;"></div>
<div style="left:294px;top:319px;width:219px;height:1px;background:#1a1a1a;"></div>
<div style="left:294px;top:335px;width:219px;height:1px;background:#1a1a1a;"></div>
<div style="left:294px;top:351px;width:219px;height:1px;background:#1a1a1a;"></div>
<div style="left:294px;top:303px;width:1px;height:49px;background:#1a1a1a;"></div>
<div style="left:512px;top:303px;width:1px;height:49px;background:#1a1a1a;"></div>
<div style="left:251px;top:380px;width:1131px;height:2px;background:#173a6a;"></div>
<div style="left:251px;top:462px;width:1131px;height:2px;background:#173a6a;"></div>
<div class="t" style="left:253.10px;top:401.98px;font-size:9px;color:#333;font-weight:normal;font-style:normal;transform:scaleX(1.0520);transform-origin:0 0;">Period:</div>
<div class="t" style="left:253.30px;top:415.78px;font-size:9px;color:#333;font-weight:normal;font-style:normal;transform:scaleX(1.0443);transform-origin:0 0;">Client: $CLIENTDESCR</div>
<div class="t" style="left:523.80px;top:420.74px;font-size:17.2px;color:#222;font-weight:normal;font-style:normal;transform:scaleX(1.0100);transform-origin:0 0;">Balance Sheet</div>
<div class="t" style="left:1279.60px;top:402.08px;font-size:9px;color:#333;font-weight:normal;font-style:normal;transform:scaleX(1.0393);transform-origin:100% 0;">Created: $SHORTDATE</div>
<div class="t" style="left:1296.28px;top:415.78px;font-size:9px;color:#333;font-weight:normal;font-style:normal;transform:scaleX(1.0160);transform-origin:100% 0;">User: $USERNAME</div>
<div style="left:521px;top:476px;width:206px;height:1px;background:#dcdcdc;"></div>
<div style="left:520px;top:476px;width:1px;height:395px;background:#b4b4b4;"></div>
<div style="left:726px;top:476px;width:1px;height:395px;background:#d2d2d2;"></div>
<div style="left:731px;top:476px;width:651px;height:1px;background:#dcdcdc;"></div>
<div style="left:730px;top:476px;width:1px;height:395px;background:#d2d2d2;"></div>
<div style="left:1381px;top:476px;width:1px;height:395px;background:#d2d2d2;"></div>
<div class="t" style="left:252.90px;top:490.02px;font-size:8.9px;color:#222;font-weight:bold;font-style:normal;transform:scaleX(1.1513);transform-origin:0 0;">Account Description</div>
<div class="t" style="left:588.40px;top:490.12px;font-size:8.9px;color:#222;font-weight:bold;font-style:normal;transform:scaleX(1.1348);transform-origin:50% 0;">Opening Balance</div>
<div class="t" style="left:870.05px;top:490.12px;font-size:8.9px;color:#222;font-weight:bold;font-style:normal;transform:scaleX(1.1307);transform-origin:50% 0;">Opening Balance</div>
<div class="t" style="left:1082.85px;top:490.12px;font-size:8.9px;color:#222;font-weight:bold;font-style:normal;transform:scaleX(1.1338);transform-origin:50% 0;">Period</div>
<div class="t" style="left:1252.58px;top:490.12px;font-size:8.9px;color:#222;font-weight:bold;font-style:normal;transform:scaleX(1.1150);transform-origin:50% 0;">Closing Balance</div>
<div class="t" style="left:252.90px;top:510.82px;font-size:8.9px;color:#222;font-weight:bold;font-style:normal;transform:scaleX(1.1403);transform-origin:0 0;">UTILITY ASSETS</div>
<div class="t" style="left:252.90px;top:522.62px;font-size:8.9px;color:#6e6e6e;font-weight:bold;font-style:italic;transform:scaleX(1.1840);transform-origin:0 0;">Intangible assets</div>
<div style="left:521px;top:528px;width:206px;height:1px;background:#d9d9d9;"></div>
<div style="left:731px;top:528px;width:650px;height:1px;background:#d9d9d9;"></div>
<div style="left:810px;top:528px;width:1px;height:14px;background:#dadada;"></div>
<div style="left:1000px;top:528px;width:1px;height:14px;background:#dadada;"></div>
<div style="left:1191px;top:528px;width:1px;height:14px;background:#dadada;"></div>
<div class="t" style="left:993.63px;top:536.48px;font-size:9.3px;color:#444;font-weight:normal;font-style:normal;">0</div>
<div class="t" style="left:1374.33px;top:536.48px;font-size:9.3px;color:#444;font-weight:normal;font-style:normal;">0</div>
<svg style="position:absolute;left:1186px;top:538px" width="5" height="4" viewBox="0 0 5 4"><path d="M5 0V4H0Z" fill="#f5a623"/></svg>
<div style="left:251px;top:542px;width:266px;height:14px;background:#b8cdd0;"></div>
<div style="left:521px;top:542px;width:206px;height:14px;background:#b8cdd0;"></div>
<div style="left:731px;top:542px;width:650px;height:14px;background:#b8cdd0;"></div>
<div style="left:251px;top:542px;width:266px;height:1px;background:#8c9393;"></div>
<div style="left:251px;top:555px;width:266px;height:1px;background:#a3abab;"></div>
<div style="left:521px;top:542px;width:206px;height:1px;background:#c3c9ca;"></div>
<div style="left:521px;top:555px;width:206px;height:1px;background:#97a0a1;"></div>
<div style="left:731px;top:542px;width:650px;height:1px;background:#c3c9ca;"></div>
<div class="t" style="left:416.83px;top:549.92px;font-size:8.9px;color:#222;font-weight:bold;font-style:normal;transform:scaleX(1.1652);transform-origin:100% 0;">Sum Intangible assets</div>
<div class="t" style="left:720.05px;top:549.92px;font-size:8.9px;color:#222;font-weight:bold;font-style:normal;">0</div>
<div class="t" style="left:803.05px;top:549.92px;font-size:8.9px;color:#222;font-weight:bold;font-style:normal;">0</div>
<div class="t" style="left:993.85px;top:549.92px;font-size:8.9px;color:#222;font-weight:bold;font-style:normal;">0</div>
<div class="t" style="left:1184.15px;top:549.92px;font-size:8.9px;color:#222;font-weight:bold;font-style:normal;">0</div>
<div class="t" style="left:1374.55px;top:549.92px;font-size:8.9px;color:#222;font-weight:bold;font-style:normal;">0</div>
<div class="t" style="left:252.90px;top:566.02px;font-size:8.9px;color:#6e6e6e;font-weight:bold;font-style:italic;transform:scaleX(1.1689);transform-origin:0 0;">Real estate and land</div>
<div style="left:521px;top:572px;width:206px;height:1px;background:#d9d9d9;"></div>
<div style="left:731px;top:572px;width:650px;height:1px;background:#d9d9d9;"></div>
<div style="left:810px;top:572px;width:1px;height:13px;background:#dadada;"></div>
<div style="left:1000px;top:572px;width:1px;height:13px;background:#dadada;"></div>
<div style="left:1191px;top:572px;width:1px;height:13px;background:#dadada;"></div>
<div class="t" style="left:993.63px;top:579.88px;font-size:9.3px;color:#444;font-weight:normal;font-style:normal;">0</div>
<div class="t" style="left:1374.33px;top:579.88px;font-size:9.3px;color:#444;font-weight:normal;font-style:normal;">0</div>
<svg style="position:absolute;left:1186px;top:581px" width="5" height="4" viewBox="0 0 5 4"><path d="M5 0V4H0Z" fill="#f5a623"/></svg>
<div style="left:251px;top:585px;width:266px;height:15px;background:#b8cdd0;"></div>
<div style="left:521px;top:585px;width:206px;height:15px;background:#b8cdd0;"></div>
<div style="left:731px;top:585px;width:650px;height:15px;background:#b8cdd0;"></div>
<div style="left:251px;top:585px;width:266px;height:1px;background:#8c9393;"></div>
<div style="left:251px;top:599px;width:266px;height:1px;background:#a3abab;"></div>
<div style="left:521px;top:585px;width:206px;height:1px;background:#c3c9ca;"></div>
<div style="left:521px;top:599px;width:206px;height:1px;background:#97a0a1;"></div>
<div style="left:731px;top:585px;width:650px;height:1px;background:#c3c9ca;"></div>
<div class="t" style="left:402.98px;top:593.72px;font-size:8.9px;color:#222;font-weight:bold;font-style:normal;transform:scaleX(1.1612);transform-origin:100% 0;">Sum Real estate and land</div>
<div class="t" style="left:720.05px;top:593.72px;font-size:8.9px;color:#222;font-weight:bold;font-style:normal;">0</div>
<div class="t" style="left:803.05px;top:593.72px;font-size:8.9px;color:#222;font-weight:bold;font-style:normal;">0</div>
<div class="t" style="left:993.85px;top:593.72px;font-size:8.9px;color:#222;font-weight:bold;font-style:normal;">0</div>
<div class="t" style="left:1184.15px;top:593.72px;font-size:8.9px;color:#222;font-weight:bold;font-style:normal;">0</div>
<div class="t" style="left:1374.55px;top:593.72px;font-size:8.9px;color:#222;font-weight:bold;font-style:normal;">0</div>
<div class="t" style="left:252.90px;top:609.42px;font-size:8.9px;color:#6e6e6e;font-weight:bold;font-style:italic;transform:scaleX(1.1659);transform-origin:0 0;">Machinepark &amp; inventory</div>
<div style="left:521px;top:615px;width:206px;height:1px;background:#d9d9d9;"></div>
<div style="left:731px;top:615px;width:650px;height:1px;background:#d9d9d9;"></div>
<div style="left:810px;top:615px;width:1px;height:13px;background:#dadada;"></div>
<div style="left:1000px;top:615px;width:1px;height:13px;background:#dadada;"></div>
<div style="left:1191px;top:615px;width:1px;height:13px;background:#dadada;"></div>
<div class="t" style="left:993.63px;top:622.88px;font-size:9.3px;color:#444;font-weight:normal;font-style:normal;">0</div>
<div class="t" style="left:1374.33px;top:622.88px;font-size:9.3px;color:#444;font-weight:normal;font-style:normal;">0</div>
<svg style="position:absolute;left:1186px;top:624px" width="5" height="4" viewBox="0 0 5 4"><path d="M5 0V4H0Z" fill="#f5a623"/></svg>
<div style="left:251px;top:628px;width:266px;height:16px;background:#b8cdd0;"></div>
<div style="left:521px;top:628px;width:206px;height:16px;background:#b8cdd0;"></div>
<div style="left:731px;top:628px;width:650px;height:16px;background:#b8cdd0;"></div>
<div style="left:251px;top:628px;width:266px;height:1px;background:#8c9393;"></div>
<div style="left:251px;top:643px;width:266px;height:1px;background:#a3abab;"></div>
<div style="left:521px;top:628px;width:206px;height:1px;background:#c3c9ca;"></div>
<div style="left:521px;top:643px;width:206px;height:1px;background:#97a0a1;"></div>
<div style="left:731px;top:628px;width:650px;height:1px;background:#c3c9ca;"></div>
<div class="t" style="left:383.20px;top:638.52px;font-size:8.9px;color:#222;font-weight:bold;font-style:normal;transform:scaleX(1.1615);transform-origin:100% 0;">Sum Machinepark &amp; inventory</div>
<div class="t" style="left:720.05px;top:638.52px;font-size:8.9px;color:#222;font-weight:bold;font-style:normal;">0</div>
<div class="t" style="left:803.05px;top:638.52px;font-size:8.9px;color:#222;font-weight:bold;font-style:normal;">0</div>
<div class="t" style="left:993.85px;top:638.52px;font-size:8.9px;color:#222;font-weight:bold;font-style:normal;">0</div>
<div class="t" style="left:1184.15px;top:638.52px;font-size:8.9px;color:#222;font-weight:bold;font-style:normal;">0</div>
<div class="t" style="left:1374.55px;top:638.52px;font-size:8.9px;color:#222;font-weight:bold;font-style:normal;">0</div>
<div class="t" style="left:252.90px;top:654.52px;font-size:8.9px;color:#6e6e6e;font-weight:bold;font-style:italic;transform:scaleX(1.1372);transform-origin:0 0;">Financial assets</div>
<div style="left:521px;top:660px;width:206px;height:1px;background:#d9d9d9;"></div>
<div style="left:731px;top:660px;width:650px;height:1px;background:#d9d9d9;"></div>
<div style="left:810px;top:660px;width:1px;height:14px;background:#dadada;"></div>
<div style="left:1000px;top:660px;width:1px;height:14px;background:#dadada;"></div>
<div style="left:1191px;top:660px;width:1px;height:14px;background:#dadada;"></div>
<div class="t" style="left:993.63px;top:668.68px;font-size:9.3px;color:#444;font-weight:normal;font-style:normal;">0</div>
<div class="t" style="left:1374.33px;top:668.68px;font-size:9.3px;color:#444;font-weight:normal;font-style:normal;">0</div>
<svg style="position:absolute;left:1186px;top:670px" width="5" height="4" viewBox="0 0 5 4"><path d="M5 0V4H0Z" fill="#f5a623"/></svg>
<div style="left:251px;top:674px;width:266px;height:16px;background:#b8cdd0;"></div>
<div style="left:521px;top:674px;width:206px;height:16px;background:#b8cdd0;"></div>
<div style="left:731px;top:674px;width:650px;height:16px;background:#b8cdd0;"></div>
<div style="left:251px;top:674px;width:266px;height:1px;background:#8c9393;"></div>
<div style="left:251px;top:689px;width:266px;height:1px;background:#a3abab;"></div>
<div style="left:521px;top:674px;width:206px;height:1px;background:#c3c9ca;"></div>
<div style="left:521px;top:689px;width:206px;height:1px;background:#97a0a1;"></div>
<div style="left:731px;top:674px;width:650px;height:1px;background:#c3c9ca;"></div>
<div class="t" style="left:418.97px;top:684.32px;font-size:8.9px;color:#222;font-weight:bold;font-style:normal;transform:scaleX(1.1499);transform-origin:100% 0;">Total Financial assets</div>
<div class="t" style="left:720.05px;top:684.32px;font-size:8.9px;color:#222;font-weight:bold;font-style:normal;">0</div>
<div class="t" style="left:803.05px;top:684.32px;font-size:8.9px;color:#222;font-weight:bold;font-style:normal;">0</div>
<div class="t" style="left:993.85px;top:684.32px;font-size:8.9px;color:#222;font-weight:bold;font-style:normal;">0</div>
<div class="t" style="left:1184.15px;top:684.32px;font-size:8.9px;color:#222;font-weight:bold;font-style:normal;">0</div>
<div class="t" style="left:1374.55px;top:684.32px;font-size:8.9px;color:#222;font-weight:bold;font-style:normal;">0</div>
<div style="left:251px;top:690px;width:266px;height:4px;background:#0b2d5c;"></div>
<div style="left:521px;top:690px;width:206px;height:4px;background:#0b2d5c;"></div>
<div style="left:731px;top:690px;width:650px;height:4px;background:#0b2d5c;"></div>
<div class="t" style="left:421.34px;top:713.52px;font-size:8.9px;color:#222;font-weight:bold;font-style:normal;transform:scaleX(1.1299);transform-origin:100% 0;">SUM UTILITY ASSETS</div>
<div class="t" style="left:720.05px;top:713.82px;font-size:8.9px;color:#222;font-weight:bold;font-style:normal;">0</div>
<div class="t" style="left:803.05px;top:713.82px;font-size:8.9px;color:#222;font-weight:bold;font-style:normal;">0</div>
<div class="t" style="left:993.85px;top:713.82px;font-size:8.9px;color:#222;font-weight:bold;font-style:normal;">0</div>
<div class="t" style="left:1184.15px;top:713.82px;font-size:8.9px;color:#222;font-weight:bold;font-style:normal;">0</div>
<div class="t" style="left:1374.55px;top:713.82px;font-size:8.9px;color:#222;font-weight:bold;font-style:normal;">0</div>
<div style="left:251px;top:731px;width:1131px;height:1px;background:#4a4a4a;"></div>
<div class="t" style="left:252.90px;top:741.52px;font-size:8.9px;color:#222;font-weight:bold;font-style:normal;transform:scaleX(1.0694);transform-origin:0 0;">CURRENT ASSETS</div>
<div class="t" style="left:252.90px;top:757.52px;font-size:8.9px;color:#6e6e6e;font-weight:bold;font-style:italic;transform:scaleX(1.1652);transform-origin:0 0;">Stock, prod- &amp; work in progress</div>
<div style="left:521px;top:763px;width:206px;height:1px;background:#d9d9d9;"></div>
<div style="left:731px;top:763px;width:650px;height:1px;background:#d9d9d9;"></div>
<div style="left:810px;top:763px;width:1px;height:14px;background:#dadada;"></div>
<div style="left:1000px;top:763px;width:1px;height:14px;background:#dadada;"></div>
<div style="left:1191px;top:763px;width:1px;height:14px;background:#dadada;"></div>
<div class="t" style="left:993.63px;top:771.68px;font-size:9.3px;color:#444;font-weight:normal;font-style:normal;">0</div>
<div class="t" style="left:1374.33px;top:771.68px;font-size:9.3px;color:#444;font-weight:normal;font-style:normal;">0</div>
<svg style="position:absolute;left:1186px;top:773px" width="5" height="4" viewBox="0 0 5 4"><path d="M5 0V4H0Z" fill="#f5a623"/></svg>
<div style="left:251px;top:777px;width:266px;height:13px;background:#b8cdd0;"></div>
<div style="left:521px;top:777px;width:206px;height:13px;background:#b8cdd0;"></div>
<div style="left:731px;top:777px;width:650px;height:13px;background:#b8cdd0;"></div>
<div style="left:251px;top:777px;width:266px;height:1px;background:#8c9393;"></div>
<div style="left:251px;top:789px;width:266px;height:1px;background:#a3abab;"></div>
<div style="left:521px;top:777px;width:206px;height:1px;background:#c3c9ca;"></div>
<div style="left:521px;top:789px;width:206px;height:1px;background:#97a0a1;"></div>
<div style="left:731px;top:777px;width:650px;height:1px;background:#c3c9ca;"></div>
<div class="t" style="left:354.04px;top:784.62px;font-size:8.9px;color:#222;font-weight:bold;font-style:normal;transform:scaleX(1.1584);transform-origin:100% 0;">Sum Stock, prod- &amp; work in progress</div>
<div class="t" style="left:720.05px;top:784.62px;font-size:8.9px;color:#222;font-weight:bold;font-style:normal;">0</div>
<div class="t" style="left:803.05px;top:784.62px;font-size:8.9px;color:#222;font-weight:bold;font-style:normal;">0</div>
<div class="t" style="left:993.85px;top:784.62px;font-size:8.9px;color:#222;font-weight:bold;font-style:normal;">0</div>
<div class="t" style="left:1184.15px;top:784.62px;font-size:8.9px;color:#222;font-weight:bold;font-style:normal;">0</div>
<div class="t" style="left:1374.55px;top:784.62px;font-size:8.9px;color:#222;font-weight:bold;font-style:normal;">0</div>
<div class="t" style="left:252.90px;top:800.72px;font-size:8.9px;color:#6e6e6e;font-weight:bold;font-style:italic;transform:scaleX(1.1444);transform-origin:0 0;">Account receivable</div>
<div style="left:521px;top:806px;width:206px;height:1px;background:#d9d9d9;"></div>
<div style="left:731px;top:806px;width:650px;height:1px;background:#d9d9d9;"></div>
<div style="left:810px;top:806px;width:1px;height:14px;background:#dadada;"></div>
<div style="left:1000px;top:806px;width:1px;height:14px;background:#dadada;"></div>
<div style="left:1191px;top:806px;width:1px;height:14px;background:#dadada;"></div>
<div class="t" style="left:993.63px;top:814.68px;font-size:9.3px;color:#444;font-weight:normal;font-style:normal;">0</div>
<div class="t" style="left:1374.33px;top:814.68px;font-size:9.3px;color:#444;font-weight:normal;font-style:normal;">0</div>
<svg style="position:absolute;left:1186px;top:816px" width="5" height="4" viewBox="0 0 5 4"><path d="M5 0V4H0Z" fill="#f5a623"/></svg>
<div style="left:251px;top:820px;width:266px;height:14px;background:#b8cdd0;"></div>
<div style="left:521px;top:820px;width:206px;height:14px;background:#b8cdd0;"></div>
<div style="left:731px;top:820px;width:650px;height:14px;background:#b8cdd0;"></div>
<div style="left:251px;top:820px;width:266px;height:1px;background:#8c9393;"></div>
<div style="left:251px;top:833px;width:266px;height:1px;background:#a3abab;"></div>
<div style="left:521px;top:820px;width:206px;height:1px;background:#c3c9ca;"></div>
<div style="left:521px;top:833px;width:206px;height:1px;background:#97a0a1;"></div>
<div style="left:731px;top:820px;width:650px;height:1px;background:#c3c9ca;"></div>
<div class="t" style="left:407.75px;top:828.22px;font-size:8.9px;color:#222;font-weight:bold;font-style:normal;transform:scaleX(1.1442);transform-origin:100% 0;">Sum Account receivable</div>
<div class="t" style="left:720.05px;top:828.22px;font-size:8.9px;color:#222;font-weight:bold;font-style:normal;">0</div>
<div class="t" style="left:803.05px;top:828.22px;font-size:8.9px;color:#222;font-weight:bold;font-style:normal;">0</div>
<div class="t" style="left:993.85px;top:828.22px;font-size:8.9px;color:#222;font-weight:bold;font-style:normal;">0</div>
<div class="t" style="left:1184.15px;top:828.22px;font-size:8.9px;color:#222;font-weight:bold;font-style:normal;">0</div>
<div class="t" style="left:1374.55px;top:828.22px;font-size:8.9px;color:#222;font-weight:bold;font-style:normal;">0</div>
<div class="t" style="left:252.90px;top:844.72px;font-size:8.9px;color:#6e6e6e;font-weight:bold;font-style:italic;transform:scaleX(1.1793);transform-origin:0 0;">Other short-term receivables</div>
<div style="left:521px;top:850px;width:206px;height:1px;background:#d9d9d9;"></div>
<div style="left:731px;top:850px;width:650px;height:1px;background:#d9d9d9;"></div>
<div style="left:810px;top:850px;width:1px;height:14px;background:#dadada;"></div>
<div style="left:1000px;top:850px;width:1px;height:14px;background:#dadada;"></div>
<div style="left:1191px;top:850px;width:1px;height:14px;background:#dadada;"></div>
<div class="t" style="left:993.63px;top:858.18px;font-size:9.3px;color:#444;font-weight:normal;font-style:normal;">0</div>
<div class="t" style="left:1374.33px;top:858.18px;font-size:9.3px;color:#444;font-weight:normal;font-style:normal;">0</div>
<svg style="position:absolute;left:1186px;top:860px" width="5" height="4" viewBox="0 0 5 4"><path d="M5 0V4H0Z" fill="#f5a623"/></svg>
<div style="left:251px;top:864px;width:266px;height:13px;background:#b8cdd0;"></div>
<div style="left:521px;top:864px;width:206px;height:13px;background:#b8cdd0;"></div>
<div style="left:731px;top:864px;width:650px;height:13px;background:#b8cdd0;"></div>
<div style="left:251px;top:864px;width:266px;height:1px;background:#8c9393;"></div>
<div style="left:251px;top:876px;width:266px;height:1px;background:#a3abab;"></div>
<div style="left:521px;top:864px;width:206px;height:1px;background:#c3c9ca;"></div>
<div style="left:521px;top:876px;width:206px;height:1px;background:#97a0a1;"></div>
<div style="left:731px;top:864px;width:650px;height:1px;background:#c3c9ca;"></div>
<div class="t" style="left:367.36px;top:871.32px;font-size:8.9px;color:#222;font-weight:bold;font-style:normal;transform:scaleX(1.1782);transform-origin:100% 0;">Sum Other short-term receivables</div>
<div class="t" style="left:720.05px;top:871.32px;font-size:8.9px;color:#222;font-weight:bold;font-style:normal;">0</div>
<div class="t" style="left:803.05px;top:871.32px;font-size:8.9px;color:#222;font-weight:bold;font-style:normal;">0</div>
<div class="t" style="left:993.85px;top:871.32px;font-size:8.9px;color:#222;font-weight:bold;font-style:normal;">0</div>
<div class="t" style="left:1184.15px;top:871.32px;font-size:8.9px;color:#222;font-weight:bold;font-style:normal;">0</div>
<div class="t" style="left:1374.55px;top:871.32px;font-size:8.9px;color:#222;font-weight:bold;font-style:normal;">0</div>
<div style="left:731px;top:674px;width:78px;height:15px;border:1px solid #7cc08f;box-sizing:border-box"></div>
<div style="left:730px;top:694px;width:1px;height:37px;background:#8fd0a0;"></div>
<div style="left:0px;top:871px;width:1424px;height:43px;background:#ffffff;"></div>
<div style="left:24px;top:871px;width:1400px;height:12px;background:#cbcbcb;"></div>
<div style="left:37px;top:873px;width:32px;height:9px;background:#ececec;border-right:1px solid #b5b5b5;border-bottom:1px solid #d0d0d0"></div>
<div style="left:0px;top:883px;width:1424px;height:27px;background:#eaeef2;"></div>
<div style="left:0px;top:883px;width:645px;height:27px;background:#ffffff;"></div>
<div style="left:24px;top:871px;width:13px;height:13px;border:1px solid #9a9a9a;background:#fff"></div>
<svg style="position:absolute;left:27px;top:874px" width="8" height="8" viewBox="0 0 8 8"><path d="M6.5 0.3V7.7L0.8 4Z" fill="#a0a0a0"/></svg>
<div style="left:0px;top:910px;width:1424px;height:1px;background:#c4cedb;"></div>
<div style="left:0;top:910px;width:1424px;height:4px;background:linear-gradient(90deg,#e2dbee,#ecd9e6 60%,#f1d8dc)"></div>
<div class="t" style="left:6.60px;top:897.01px;font-size:11.8px;color:#34405a;font-weight:normal;font-style:normal;transform:scaleX(0.9076);transform-origin:0 0;">BS01</div>
<div class="t" style="left:47.00px;top:897.01px;font-size:11.8px;color:#34405a;font-weight:normal;font-style:normal;transform:scaleX(0.9273);transform-origin:0 0;">PARAM</div>
<div class="t" style="left:99.20px;top:897.01px;font-size:11.8px;color:#34405a;font-weight:normal;font-style:normal;transform:scaleX(0.9249);transform-origin:0 0;">GETTABLE</div>
<div class="t" style="left:169.20px;top:897.01px;font-size:11.8px;color:#34405a;font-weight:normal;font-style:normal;transform:scaleX(0.9214);transform-origin:0 0;">PANE</div>
<div class="t" style="left:212.20px;top:897.01px;font-size:11.8px;color:#34405a;font-weight:normal;font-style:normal;transform:scaleX(0.9214);transform-origin:0 0;">EVENTS</div>
<div class="t" style="left:269.00px;top:897.01px;font-size:11.8px;color:#34405a;font-weight:normal;font-style:normal;transform:scaleX(0.9268);transform-origin:0 0;">SCRIPTS</div>
<div class="t" style="left:330.10px;top:897.01px;font-size:11.8px;color:#34405a;font-weight:normal;font-style:normal;transform:scaleX(0.9478);transform-origin:0 0;">ACCOUNT</div>
<div class="t" style="left:400.10px;top:897.01px;font-size:11.8px;color:#34405a;font-weight:normal;font-style:normal;transform:scaleX(0.9271);transform-origin:0 0;">ACCOUNTGRP</div>
<div class="t" style="left:491.70px;top:897.01px;font-size:11.8px;color:#34405a;font-weight:normal;font-style:normal;transform:scaleX(0.9553);transform-origin:0 0;">UNIT</div>
<div class="t" style="left:531.80px;top:897.01px;font-size:11.8px;color:#34405a;font-weight:normal;font-style:normal;transform:scaleX(0.9538);transform-origin:0 0;">OBJECT</div>
<div class="t" style="left:589.80px;top:897.01px;font-size:11.8px;color:#34405a;font-weight:normal;font-style:normal;transform:scaleX(0.9498);transform-origin:0 0;">DIVISION</div>
<div style="left:92px;top:884px;width:1px;height:26px;background:#c9d3e0;"></div>
<div style="left:162px;top:884px;width:1px;height:26px;background:#c9d3e0;"></div>
<div style="left:205px;top:884px;width:1px;height:26px;background:#c9d3e0;"></div>
<div style="left:262px;top:884px;width:1px;height:26px;background:#c9d3e0;"></div>
<div style="left:323px;top:884px;width:1px;height:26px;background:#c9d3e0;"></div>
<div style="left:393px;top:884px;width:1px;height:26px;background:#c9d3e0;"></div>
<div style="left:485px;top:884px;width:1px;height:26px;background:#c9d3e0;"></div>
<div style="left:525px;top:884px;width:1px;height:26px;background:#c9d3e0;"></div>
<div style="left:583px;top:884px;width:1px;height:26px;background:#c9d3e0;"></div>
<div style="left:645px;top:884px;width:1px;height:26px;background:#c9d3e0;"></div>
<div style="left:0px;top:907px;width:39px;height:3px;background:#3a72b8;"></div>
<div style="left:38px;top:882px;width:48px;height:20px;border:3px solid #ee3b3b;box-sizing:content-box"></div>
</body></html>
